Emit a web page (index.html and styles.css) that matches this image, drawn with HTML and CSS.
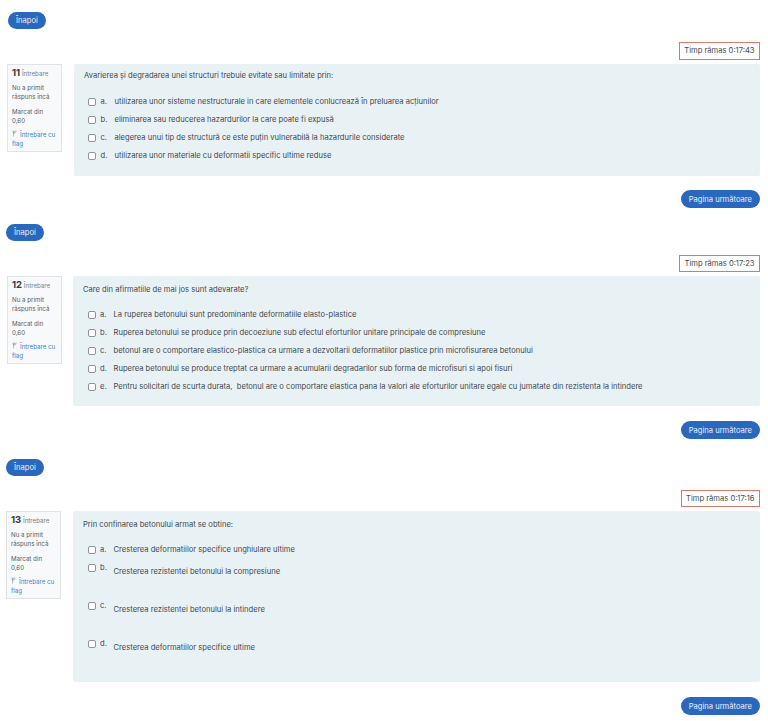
FILE: index.html
```html
<!DOCTYPE html>
<html lang="ro">
<head>
    <meta charset="UTF-8">
    <meta name="viewport" content="width=device-width, initial-scale=1.0">
    <title>Test</title>
    <link rel="stylesheet" href="styles.css">
</head>
<body>
    <section class="page page-first">
        <div class="nav-top"><button class="btn">Înapoi</button></div>
        <div class="timer-row"><div class="timer">Timp rămas 0:17:43</div></div>
        <div class="question">
            <aside class="info">
                <div class="info-head"><span class="qno">11</span> Întrebare</div>
                <p>Nu a primit răspuns încă</p>
                <p>Marcat din 0,60</p>
                <p><svg class="flag" viewBox="0 0 8 8"><path d="M2 1v7M.6 1h5.8M1 2.4h4.4M2 3.6h2" fill="none" stroke="#8a9299" stroke-width=".8"/></svg><a href="#">Întrebare cu flag</a></p>
            </aside>
            <div class="content content-short">
                <div class="qtext">Avarierea și degradarea unei structuri trebuie evitate sau limitate prin:</div>
                <label class="option"><input type="checkbox"><span class="letter">a.</span><span>utilizarea unor sisteme nestructurale in care elementele conlucrează în preluarea acțiunilor</span></label>
                <label class="option"><input type="checkbox"><span class="letter">b.</span><span>eliminarea sau reducerea hazardurilor la care poate fi expusă</span></label>
                <label class="option"><input type="checkbox"><span class="letter">c.</span><span>alegerea unui tip de structură ce este puțin vulnerabilă la hazardurile considerate</span></label>
                <label class="option"><input type="checkbox"><span class="letter">d.</span><span>utilizarea unor materiale cu deformatii specific ultime reduse</span></label>
            </div>
        </div>
        <div class="nav-bottom"><button class="btn">Pagina următoare</button></div>
    </section>

    <section class="page page-second">
        <div class="nav-top"><button class="btn">Înapoi</button></div>
        <div class="timer-row"><div class="timer">Timp rămas 0:17:23</div></div>
        <div class="question">
            <aside class="info">
                <div class="info-head"><span class="qno">12</span> Întrebare</div>
                <p>Nu a primit răspuns încă</p>
                <p>Marcat din 0,60</p>
                <p><svg class="flag" viewBox="0 0 8 8"><path d="M2 1v7M.6 1h5.8M1 2.4h4.4M2 3.6h2" fill="none" stroke="#8a9299" stroke-width=".8"/></svg><a href="#">Întrebare cu flag</a></p>
            </aside>
            <div class="content">
                <div class="qtext">Care din afirmatiile de mai jos sunt adevarate?</div>
                <label class="option"><input type="checkbox"><span class="letter">a.</span><span>La ruperea betonului sunt predominante deformatiile elasto-plastice</span></label>
                <label class="option"><input type="checkbox"><span class="letter">b.</span><span>Ruperea betonului se produce prin decoeziune sub efectul eforturilor unitare principale de compresiune</span></label>
                <label class="option"><input type="checkbox"><span class="letter">c.</span><span>betonul are o comportare elastico-plastica ca urmare a dezvoltarii deformatiilor plastice prin microfisurarea betonului</span></label>
                <label class="option"><input type="checkbox"><span class="letter">d.</span><span>Ruperea betonului se produce treptat ca urmare a acumularii degradarilor sub forma de microfisuri si apoi fisuri</span></label>
                <label class="option"><input type="checkbox"><span class="letter">e.</span><span>Pentru solicitari de scurta durata,&nbsp; betonul are o comportare elastica pana la valori ale eforturilor unitare egale cu jumatate din rezistenta la intindere</span></label>
            </div>
        </div>
        <div class="nav-bottom"><button class="btn">Pagina următoare</button></div>
    </section>

    <section class="page page-third">
        <div class="nav-top"><button class="btn">Înapoi</button></div>
        <div class="timer-row"><div class="timer">Timp rămas 0:17:16</div></div>
        <div class="question">
            <aside class="info">
                <div class="info-head"><span class="qno">13</span> Întrebare</div>
                <p>Nu a primit răspuns încă</p>
                <p>Marcat din 0,60</p>
                <p><svg class="flag" viewBox="0 0 8 8"><path d="M2 1v7M.6 1h5.8M1 2.4h4.4M2 3.6h2" fill="none" stroke="#8a9299" stroke-width=".8"/></svg><a href="#">Întrebare cu flag</a></p>
            </aside>
            <div class="content content-tall">
                <div class="qtext">Prin confinarea betonului armat se obtine:</div>
                <label class="option"><input type="checkbox"><span class="letter">a.</span><span>Cresterea deformatiilor specifice unghiulare ultime</span></label>
                <label class="option option-para"><input type="checkbox"><span class="letter">b.</span><span class="para">Cresterea rezistentei betonului la compresiune</span></label>
                <label class="option option-para"><input type="checkbox"><span class="letter">c.</span><span class="para">Cresterea rezistentei betonului la intindere</span></label>
                <label class="option option-para"><input type="checkbox"><span class="letter">d.</span><span class="para">Cresterea deformatiilor specifice ultime</span></label>
            </div>
        </div>
        <div class="nav-bottom"><button class="btn">Pagina următoare</button></div>
    </section>
</body>
</html>
```

FILE: styles.css
```css
* {
    box-sizing: border-box;
}
body {
    margin: 0;
    font-family: Inter, "Noto Sans", sans-serif;
    font-size: 7.6px;
    color: #444a50;
    background-color: #fff;
}
.page {
    padding: 0 8px 0 7px;
}
.page-first {
    padding-top: 12px;
}
.page-second {
    padding-top: 16px;
}
.page-third {
    padding-top: 20px;
    padding-left: 6px;
}
.btn {
    height: 18px;
    padding: 0 8px;
    font-family: inherit;
    font-size: 7.6px;
    color: #e6eefa;
    background-color: #2a68bd;
    border: none;
    border-radius: 9px;
}
.nav-top {
    height: 17px;
}
.nav-top .btn {
    display: block;
    height: 17px;
}
.page-first .nav-top {
    padding-left: 1px;
}
.page-second .nav-top {
    margin-left: -1px;
}
.timer-row {
    display: flex;
    justify-content: flex-end;
    margin-top: 14px;
}
.page-first .timer-row {
    margin-top: 13px;
}
.timer {
    height: 17px;
    padding: 0 4.5px;
    line-height: 15px;
    white-space: nowrap;
    border: 1px solid #d9796b;
}
.page-first .timer {
    height: 18px;
    line-height: 16px;
}
.question {
    display: flex;
    gap: 11px;
    margin-top: 4px;
}
.page-first .question, .page-third .question {
    gap: 12px;
}
.info {
    flex: none;
    align-self: flex-start;
    width: 55px;
    height: 88px;
    padding: 3px 4px;
    font-size: 6.2px;
    line-height: 9.3px;
    color: #555c63;
    background-color: #f8f9fa;
    border: 1px solid #e0e4e8;
}
.info-head {
    color: #777e85;
    line-height: 9px;
}
.qno {
    font-size: 9.5px;
    font-weight: 700;
    color: #3a4046;
}
.info p {
    margin: 5px 0;
}
.info a {
    color: #3f7fd0;
    text-decoration: none;
}
.flag {
    width: 6px;
    height: 7px;
    margin-right: 2px;
}
.content {
    flex: 1;
    height: 130px;
    padding: 9px 10px 0;
    background-color: #e8f1f4;
    border-radius: 2px;
}
.content-short {
    height: 112px;
    padding-top: 7px;
}
.content-tall {
    height: 171px;
}
.qtext {
    height: 21px;
    line-height: 10px;
}
.content-short .qtext {
    height: 22px;
}
.option {
    display: flex;
    align-items: center;
    height: 18px;
    padding-left: 4.5px;
    line-height: 10px;
    white-space: nowrap;
}
.content-short .option {
    padding-left: 4px;
}
.option input {
    flex: none;
    width: 8px;
    height: 8px;
    margin: 0 3.5px 0 0;
    appearance: none;
    background-color: #fff;
    border: 1px solid #8c939a;
    border-radius: 2px;
}
.letter {
    flex: none;
    width: 14.5px;
    padding-left: 1px;
}
.content-short .letter {
    width: 15px;
}
.option-para {
    align-items: flex-start;
    height: 38px;
}
.option-para input {
    margin-top: 5px;
}
.option-para .letter {
    padding-top: 4px;
}
.para {
    padding-top: 8px;
}
.nav-bottom {
    display: flex;
    justify-content: flex-end;
    margin-top: 15px;
}
.page-first .nav-bottom {
    margin-top: 14px;
}
```
